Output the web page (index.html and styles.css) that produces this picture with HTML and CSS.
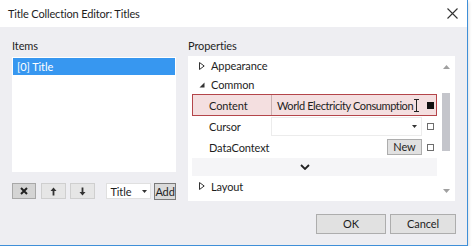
FILE: index.html
```html
<!DOCTYPE html>
<html lang="en">
<head>
  <meta charset="UTF-8">
  <title>Title Collection Editor</title>
  <link rel="stylesheet" href="styles.css">
</head>
<body>
<div class="window">
  <div class="titlebar">
    <span class="title">Title Collection Editor: Titles</span>
    <svg class="close" width="11" height="11" viewBox="0 0 11 11"><path d="M0.5 0.5L10.5 10.5M10.5 0.5L0.5 10.5" stroke="#333" stroke-width="1.1"/></svg>
  </div>
  <div class="content">
    <div class="panes">
      <div class="items-pane">
        <div class="label">Items</div>
        <div class="list">
          <div class="list-item selected">[0] Title</div>
        </div>
        <div class="list-tools">
          <div class="tool pressed w24">
            <svg width="8" height="8" viewBox="0 0 8 8"><path d="M1 1L7 7M7 1L1 7" stroke="#222" stroke-width="2"/></svg>
          </div>
          <div class="tool w25 ml5">
            <svg width="7" height="9" viewBox="0 0 7 9"><path d="M3.5 0.5L0.5 4H2.6V8.5H4.4V4H6.5Z" fill="#333"/></svg>
          </div>
          <div class="tool w26 ml4">
            <svg width="7" height="9" viewBox="0 0 7 9"><path d="M3.5 8.5L0.5 5H2.6V0.5H4.4V5H6.5Z" fill="#333"/></svg>
          </div>
          <div class="type-combo">
            <span>Title</span>
            <svg width="5" height="3" viewBox="0 0 5 3"><path d="M0 0H5L2.5 3Z" fill="#333"/></svg>
          </div>
          <div class="add-btn">Add</div>
        </div>
      </div>
      <div class="props-pane">
        <div class="label">Properties</div>
        <div class="grid">
          <div class="rows">
            <div class="category">
              <svg width="6" height="8" viewBox="0 0 6 8"><path d="M0.5 0.5L5.2 4L0.5 7.5Z" fill="none" stroke="#333"/></svg>
              <span>Appearance</span>
            </div>
            <div class="category">
              <svg width="6" height="8" viewBox="0 0 6 8"><path d="M5.5 1.5V6.5H0.5Z" fill="#333"/></svg>
              <span>Common</span>
            </div>
            <div class="prop active">
              <span class="prop-name">Content</span>
              <div class="editor text">
                <span class="value">World Electricity Consumption</span>
                <svg class="ibeam" width="5" height="13" viewBox="0 0 5 13"><path d="M0 0.5H5M0 12.5H5M2.5 0.5V12.5" stroke="#222" stroke-width="1"/></svg>
              </div>
              <span class="marker set"></span>
            </div>
            <div class="prop">
              <span class="prop-name">Cursor</span>
              <div class="editor combo">
                <svg width="5" height="3" viewBox="0 0 5 3"><path d="M0 0H5L2.5 3Z" fill="#333"/></svg>
              </div>
              <span class="marker"></span>
            </div>
            <div class="prop tall">
              <span class="prop-name">DataContext</span>
              <div class="editor buttons">
                <div class="new-btn">New</div>
              </div>
              <span class="marker"></span>
            </div>
            <div class="more">
              <svg width="10" height="6" viewBox="0 0 10 6"><path d="M1 1L5 5L9 1" fill="none" stroke="#222" stroke-width="1.8"/></svg>
            </div>
            <div class="category">
              <svg width="6" height="8" viewBox="0 0 6 8"><path d="M0.5 0.5L5.2 4L0.5 7.5Z" fill="none" stroke="#333"/></svg>
              <span>Layout</span>
            </div>
          </div>
          <div class="scrollbar">
            <svg width="7" height="4" viewBox="0 0 7 4"><path d="M0 4H7L3.5 0Z" fill="#a0a0a0"/></svg>
            <div class="track"><div class="thumb"></div></div>
            <svg width="7" height="4" viewBox="0 0 7 4"><path d="M0 0H7L3.5 4Z" fill="#a0a0a0"/></svg>
          </div>
        </div>
      </div>
    </div>
    <div class="footer">
      <div class="dlg-btn ok">OK</div>
      <div class="dlg-btn cancel">Cancel</div>
    </div>
  </div>
</div>
</body>
</html>
```

FILE: styles.css
```css
body {
    margin: 0;
    background-color: #ffffff;
    font-family: Lato, "Noto Sans", sans-serif;
    font-size: 11px;
    letter-spacing: -0.1px;
    color: #1e1e1e;
}

.window {
    width: 467px;
    border-right: 1px solid #3f8fd8;
    border-bottom: 1px solid #3f8fd8;
    box-shadow: 1px 2px 3px rgba(0, 0, 0, 0.12);
}

.titlebar {
    height: 27px;
    display: flex;
    align-items: center;
    justify-content: space-between;
    padding: 0 9px 0 8px;
    background-color: #ffffff;
}

.title {
    letter-spacing: -0.15px;
}

.content {
    height: 208px;
    padding: 10px 12px 0 12px;
    background-color: #eeeef2;
}

.panes {
    display: flex;
    gap: 12px;
    height: 164px;
}

.label {
    height: 18px;
    line-height: 18px;
}

/* left side: item list */
.items-pane {
    width: 164px;
}

.list {
    margin-top: 2px;
    height: 113px;
    padding: 1px;
    background-color: #ffffff;
}

.list-item {
    height: 17px;
    line-height: 17px;
    padding-left: 4px;
}

.list-item.selected {
    background-color: #3797f0;
    color: #ffffff;
}

.list-tools {
    display: flex;
    align-items: center;
    margin-top: 11px;
    height: 16px;
}

.tool {
    height: 14px;
    display: flex;
    align-items: center;
    justify-content: center;
    background-color: #e6e6e6;
    border: 1px solid #cfcfcf;
}

.tool.pressed {
    background-color: #d4d4d4;
    border-color: #a8a8a8;
}

.w24 { width: 22px; }
.w25 { width: 23px; }
.w26 { width: 24px; }
.ml5 { margin-left: 5px; }
.ml4 { margin-left: 4px; }

.type-combo {
    margin-left: 11px;
    width: 37px;
    height: 14px;
    padding: 0 3px;
    display: flex;
    align-items: center;
    justify-content: space-between;
    background-color: #ffffff;
    border: 1px solid #e0e0e0;
}

.add-btn {
    margin-left: 3px;
    width: 20px;
    height: 15px;
    line-height: 15px;
    text-align: center;
    background-color: #dadada;
    border: 1px solid #7a7a7a;
}

/* right side: property grid */
.props-pane {
    width: 267px;
}

.grid {
    margin-top: 1px;
    height: 145px;
    display: flex;
    background-color: #ffffff;
}

.rows {
    flex: 1;
    padding-left: 4px;
}

.category {
    height: 19px;
    display: flex;
    align-items: center;
    gap: 6px;
    padding-left: 7px;
}

.category:last-child {
    height: 20px;
}

.prop {
    box-sizing: border-box;
    height: 20px;
    display: flex;
    align-items: center;
    border: 1px solid transparent;
}

.prop.active {
    height: 22px;
    background-color: #f4dfe0;
    border-color: #b4454a;
}

.prop.tall {
    height: 22px;
}

.prop-name {
    width: 62px;
    padding-left: 16px;
}

.editor {
    width: 151px;
    height: 100%;
    display: flex;
    align-items: center;
    box-sizing: border-box;
}

.editor.text {
    border-left: 1px solid #c9b1b2;
    padding-left: 5px;
    white-space: nowrap;
}

.value {
    flex: none;
    letter-spacing: -0.4px;
}

.ibeam {
    flex: none;
    margin-left: 1px;
}

.editor.combo {
    height: 19px;
    justify-content: flex-end;
    padding-right: 4px;
    border: 1px solid #ececec;
}

.editor.buttons {
    justify-content: flex-end;
}

.new-btn {
    width: 33px;
    height: 14px;
    line-height: 14px;
    text-align: center;
    background-color: #e1e1e1;
    border: 1px solid #adadad;
}

.marker {
    flex: none;
    margin-left: 5px;
    width: 5px;
    height: 5px;
    border: 1px solid #6e6e6e;
    background-color: #ffffff;
}

.marker.set {
    background-color: #111111;
    border-color: #111111;
}

.more {
    height: 18px;
    display: flex;
    align-items: center;
    justify-content: center;
    padding-right: 20px;
    background-color: #f5f5f7;
}

.scrollbar {
    width: 18px;
    display: flex;
    flex-direction: column;
    align-items: center;
    padding: 9px 0 8px 0;
    background-color: #ffffff;
}

.track {
    flex: 1;
    width: 8px;
    padding-top: 24px;
}

.thumb {
    height: 58px;
    background-color: #c4c5cb;
}

.footer {
    display: flex;
    justify-content: flex-end;
    gap: 4px;
    margin-top: 13px;
}

.dlg-btn {
    height: 18px;
    line-height: 18px;
    text-align: center;
    background-color: #e1e1e1;
    border: 1px solid #adadad;
}

.dlg-btn.ok {
    width: 68px;
}

.dlg-btn.cancel {
    width: 64px;
    margin-right: -1px;
}
```
